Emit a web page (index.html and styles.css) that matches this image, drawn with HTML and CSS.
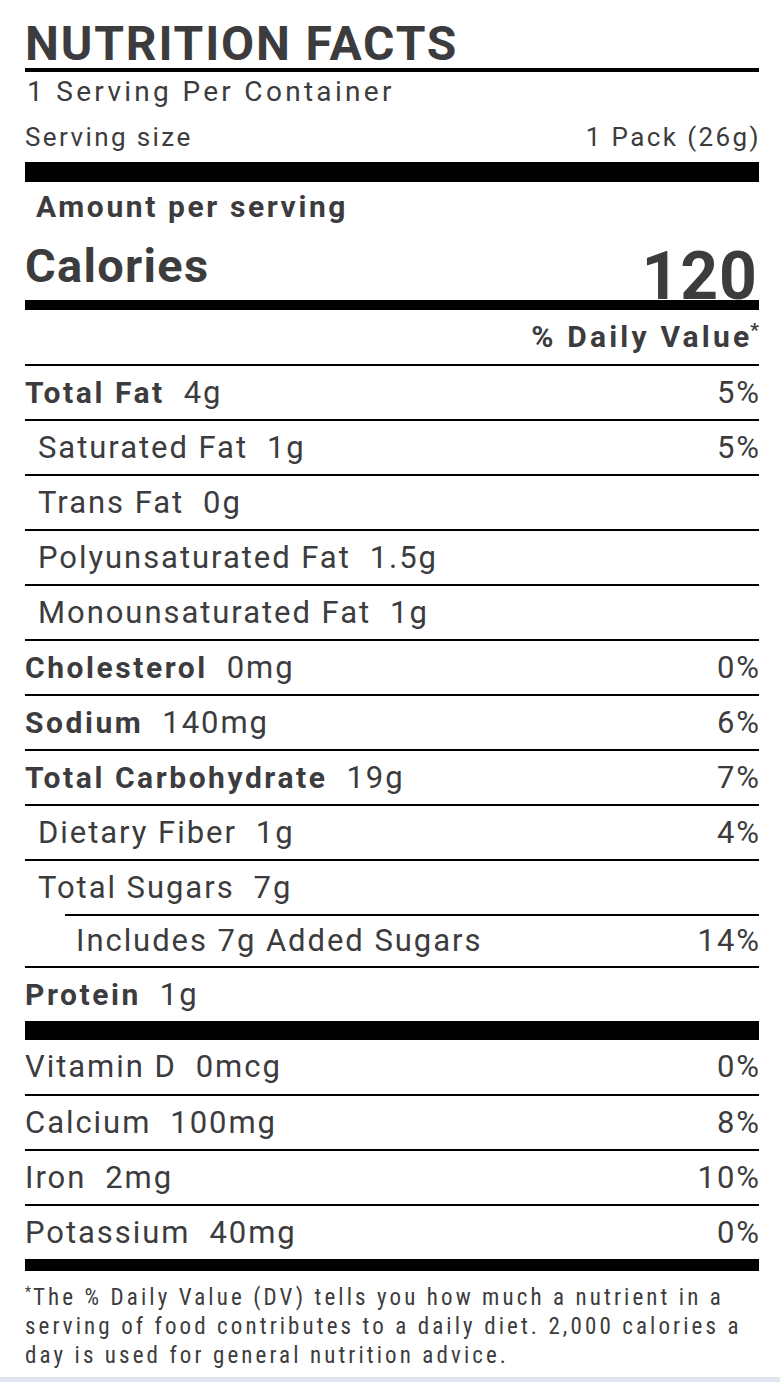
FILE: index.html
```html
<!DOCTYPE html>
<html lang="en">
<head>
<meta charset="utf-8">
<title>Nutrition Facts</title>
<link rel="stylesheet" href="styles.css">
</head>
<body>
<div class="label">
  <h1 class="title">NUTRITION FACTS</h1>
  <div class="servings">1 Serving Per Container</div>
  <div class="serving-size"><span>Serving size</span><span>1 Pack (26g)</span></div>
  <div class="bar bar-thick"></div>
  <div class="amount">Amount per serving</div>
  <div class="calories"><span class="cal-label">Calories</span><span class="cal-num">120</span></div>
  <div class="bar bar-medium"></div>
  <div class="dv-head">% Daily Value<sup>*</sup></div>

  <div class="row"><span class="name"><b>Total Fat</b><span class="amt">4g</span></span><span class="pct">5%</span></div>
  <div class="row sub"><span class="name">Saturated Fat<span class="amt">1g</span></span><span class="pct">5%</span></div>
  <div class="row sub"><span class="name">Trans Fat<span class="amt">0g</span></span></div>
  <div class="row sub"><span class="name">Polyunsaturated Fat<span class="amt">1.5g</span></span></div>
  <div class="row sub"><span class="name">Monounsaturated Fat<span class="amt">1g</span></span></div>
  <div class="row"><span class="name"><b>Cholesterol</b><span class="amt">0mg</span></span><span class="pct">0%</span></div>
  <div class="row"><span class="name"><b>Sodium</b><span class="amt">140mg</span></span><span class="pct">6%</span></div>
  <div class="row"><span class="name"><b>Total Carbohydrate</b><span class="amt">19g</span></span><span class="pct">7%</span></div>
  <div class="row sub"><span class="name">Dietary Fiber<span class="amt">1g</span></span><span class="pct">4%</span></div>
  <div class="row sub"><span class="name">Total Sugars<span class="amt">7g</span></span></div>
  <div class="row added"><span class="name">Includes 7g Added Sugars</span><span class="pct">14%</span></div>
  <div class="row"><span class="name"><b>Protein</b><span class="amt">1g</span></span></div>
  <div class="bar bar-thick2"></div>

  <div class="row vit first"><span class="name">Vitamin D<span class="amt">0mcg</span></span><span class="pct">0%</span></div>
  <div class="row vit"><span class="name">Calcium<span class="amt">100mg</span></span><span class="pct">8%</span></div>
  <div class="row vit"><span class="name">Iron<span class="amt">2mg</span></span><span class="pct">10%</span></div>
  <div class="row vit"><span class="name">Potassium<span class="amt">40mg</span></span><span class="pct">0%</span></div>
  <div class="bar bar-bottom"></div>

  <p class="footnote"><sup>*</sup>The % Daily Value (DV) tells you how much a nutrient in a serving of food contributes to a daily diet. 2,000 calories a day is used for general nutrition advice.</p>
</div>
<div class="page-edge"></div>
</body>
</html>
```

FILE: styles.css
```css
html, body {
  margin: 0;
  padding: 0;
  background: #ffffff;
}

body {
  font-family: Roboto, "Noto Sans", sans-serif;
  color: #3c3c3e;
  width: 780px;
  height: 1382px;
  overflow: hidden;
  display: flex;
  flex-direction: column;
}

.label {
  margin-left: 25px;
  width: 734px;
  flex: 1;
}

.title {
  margin: 0;
  padding-top: 20px;
  font-size: 48px;
  line-height: 48px;
  font-weight: 700;
  letter-spacing: 1.85px;
  border-bottom: 4px solid #000;
}

.servings {
  font-size: 28px;
  line-height: 40px;
  letter-spacing: 3.3px;
  padding-left: 2px;
}

.serving-size {
  display: flex;
  justify-content: space-between;
  font-size: 26px;
  line-height: 50px;
  letter-spacing: 2.4px;
  margin-right: -2px;
}

.bar { background: #000; }
.bar-thick { height: 20px; }
.bar-medium { height: 10px; }
.bar-thick2 { height: 19px; }
.bar-bottom { height: 12px; }

.amount {
  font-size: 30px;
  line-height: 50px;
  font-weight: 700;
  letter-spacing: 2.6px;
  padding-left: 11px;
}

.calories {
  display: flex;
  justify-content: space-between;
  align-items: flex-end;
  height: 68px;
  font-weight: 700;
}

.cal-label {
  font-size: 47px;
  line-height: 50px;
  letter-spacing: 1.3px;
  margin-bottom: 9px;
}

.cal-num {
  font-size: 66px;
  line-height: 46px;
  letter-spacing: 1px;
  margin-right: 1px;
}

.dv-head {
  text-align: right;
  font-size: 30px;
  line-height: 54px;
  font-weight: 700;
  letter-spacing: 3.2px;
}

.dv-head sup {
  font-size: 19px;
  vertical-align: 11px;
  line-height: 0;
  letter-spacing: 0;
  margin-left: -2px;
}

.row {
  display: flex;
  justify-content: space-between;
  border-top: 2px solid #000;
  height: 53px;
  font-size: 31px;
  line-height: 53px;
  letter-spacing: 1.95px;
  white-space: nowrap;
}

.row .pct {
  margin-right: -2px;
}

.row b {
  font-weight: 700;
  font-size: 30px;
  letter-spacing: 2.55px;
}

.row .amt {
  margin-left: 19px;
}

.row.sub .name {
  padding-left: 13px;
}

.row.added {
  margin-left: 40px;
  height: 50px;
  line-height: 50px;
}

.row.added .name {
  padding-left: 11px;
}

.row.vit.first {
  border-top: none;
  height: 54px;
  line-height: 54px;
}

.row.vit:last-of-type {
  height: 54px;
}

.footnote {
  margin: 0;
  padding-top: 12px;
  font-family: "Roboto Condensed", "Liberation Sans Narrow", "DejaVu Sans Condensed", Roboto, sans-serif;
  font-stretch: condensed;
  font-size: 23px;
  line-height: 29px;
  letter-spacing: 3.1px;
}

.footnote sup {
  font-size: 14px;
  line-height: 0;
  vertical-align: 8px;
  letter-spacing: 0;
  margin-right: 2px;
}

.page-edge {
  height: 5px;
  background: #e0e5ef;
}
```
